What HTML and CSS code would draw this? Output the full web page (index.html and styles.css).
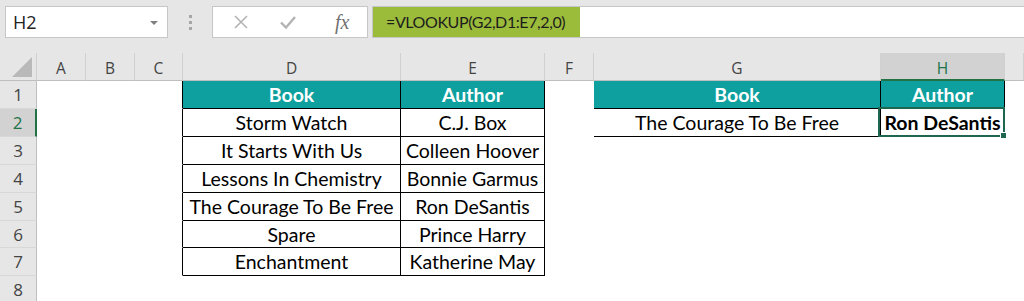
FILE: index.html
```html
<!DOCTYPE html>
<html lang="en">

<head>
    <meta charset="UTF-8">
    <title>VLOOKUP</title>

    <link rel="stylesheet" href="styles.css">

</head>

<body>

    <div class="bar">
        <div class="namebox">
            <span>H2</span>
            <span class="pil"></span>
        </div>
        <div class="prikker">
            <i></i><i></i><i></i>
        </div>
        <div class="knapper">
            <svg width="16" height="16" viewBox="0 0 16 16">
                <path d="M2 2 L14 14 M14 2 L2 14" stroke="#b3b3b3" stroke-width="1.6" fill="none" />
            </svg>
            <svg width="18" height="16" viewBox="0 0 18 16">
                <path d="M2 8.5 L7 13.5 L16 3" stroke="#b3b3b3" stroke-width="2.4" fill="none" />
            </svg>
            <span class="fx">fx</span>
        </div>
        <div class="formel">
            <span class="mark">=VLOOKUP(G2,D1:E7,2,0)</span>
        </div>
    </div>

    <div class="ark">
        <div class="hj"><span class="trekant"></span></div>
        <div class="kol">A</div>
        <div class="kol">B</div>
        <div class="kol">C</div>
        <div class="kol">D</div>
        <div class="kol">E</div>
        <div class="kol">F</div>
        <div class="kol">G</div>
        <div class="kol valgt">H</div>
        <div class="kol"></div>

        <div class="nr">1</div>
        <div></div><div></div><div class="kant"></div>
        <div class="t top">Book</div>
        <div class="t top kant">Author</div>
        <div></div>
        <div class="t top">Book</div>
        <div class="t top">Author</div>
        <div></div>

        <div class="nr valgt">2</div>
        <div></div><div></div><div class="kant"></div>
        <div class="t">Storm Watch</div>
        <div class="t kant">C.J. Box</div>
        <div></div>
        <div class="t">The Courage To Be Free</div>
        <div class="t aktiv">Ron DeSantis</div>
        <div></div>

        <div class="nr">3</div>
        <div></div><div></div><div class="kant"></div>
        <div class="t">It Starts With Us</div>
        <div class="t">Colleen Hoover</div>
        <div></div><div></div><div></div><div></div>

        <div class="nr">4</div>
        <div></div><div></div><div class="kant"></div>
        <div class="t">Lessons In Chemistry</div>
        <div class="t">Bonnie Garmus</div>
        <div></div><div></div><div></div><div></div>

        <div class="nr">5</div>
        <div></div><div></div><div class="kant"></div>
        <div class="t">The Courage To Be Free</div>
        <div class="t">Ron DeSantis</div>
        <div></div><div></div><div></div><div></div>

        <div class="nr">6</div>
        <div></div><div></div><div class="kant"></div>
        <div class="t">Spare</div>
        <div class="t">Prince Harry</div>
        <div></div><div></div><div></div><div></div>

        <div class="nr">7</div>
        <div></div><div></div><div class="kant"></div>
        <div class="t">Enchantment</div>
        <div class="t">Katherine May</div>
        <div></div><div></div><div></div><div></div>

        <div class="nr">8</div>
        <div></div><div></div><div></div><div></div><div></div><div></div><div></div><div></div><div></div>
    </div>

</body>

</html>
```

FILE: styles.css
```css
body {
    margin: 0;
    width: 1024px;
    height: 301px;
    overflow: hidden;
    background-color: #e6e6e6;
    font-family: Lato, "Noto Sans", sans-serif;
}

.bar {
    display: flex;
    height: 53px;
    box-sizing: border-box;
    padding: 6px 0 0 5px;
}

.namebox,
.knapper,
.formel {
    height: 32px;
    box-sizing: border-box;
    border: solid 1px #c6c6c6;
    background: #fff;
}

.namebox {
    width: 163px;
    display: flex;
    align-items: center;
    justify-content: space-between;
    padding: 0 9px 0 7px;
    font-family: "Open Sans", sans-serif;
    font-size: 18px;
    color: #222;
}

.pil {
    border-left: 4px solid transparent;
    border-right: 4px solid transparent;
    border-top: 4px solid #808080;
    margin-top: 2px;
}

.prikker {
    width: 44px;
    display: flex;
    flex-direction: column;
    align-items: center;
    justify-content: center;
    gap: 3px;
    height: 32px;
}

.prikker i {
    width: 3px;
    height: 3px;
    background: #a6a6a6;
}

.knapper {
    width: 156px;
    display: flex;
    align-items: center;
    padding-left: 20px;
    gap: 30px;
}

.fx {
    font-family: "Liberation Serif", serif;
    font-style: italic;
    font-size: 20px;
    color: #707070;
    margin-left: 8px;
}

.formel {
    flex: 1;
    margin-left: 4px;
    border-right: none;
}

.mark {
    display: inline-block;
    width: 207px;
    height: 30px;
    line-height: 30px;
    box-sizing: border-box;
    padding-left: 13px;
    background: #9bbb3b;
    font-size: 16px;
    letter-spacing: -0.4px;
    color: #1d1d1d;
}

.ark {
    display: grid;
    grid-template-columns: 37px 49px 49px 48px 218px 144px 49px 287px 124px 1fr;
    grid-template-rows: 28px 28px 28px 28px 28px 28px 27px 28px 28px 28px;
    background: #fff;
}

.ark > div {
    box-sizing: border-box;
    border-right: solid 1px transparent;
    border-bottom: solid 1px transparent;
    display: flex;
    align-items: center;
    justify-content: center;
    font-size: 19.5px;
    color: #000;
    white-space: nowrap;
}

.ark > .hj,
.ark > .kol,
.ark > .nr {
    background: #e6e6e6;
    font-family: "Open Sans", sans-serif;
    color: #444;
    border-right-color: #d0d0d0;
    border-bottom-color: #bfbfbf;
}

.ark > .kol {
    font-size: 15.5px;
    padding-top: 3px;
}

.ark > .nr {
    font-size: 17px;
    border-bottom-color: #d8d8d8;
    border-right-color: #bfbfbf;
}

.hj {
    position: relative;
}

.trekant {
    position: absolute;
    right: 4px;
    bottom: 3px;
    border-left: 20px solid transparent;
    border-bottom: 20px solid #b9b9b9;
}

.ark > .kol.valgt {
    background: #d2d2d2;
    color: #217346;
    border-bottom: solid 2px #217346;
}

.ark > .nr.valgt {
    background: #d2d2d2;
    color: #217346;
    border-right: solid 2px #217346;
}

.ark > .t {
    border-right-color: #000;
    border-bottom-color: #000;
}

.ark > .kant {
    border-right-color: #000;
}

.ark > .top {
    background: #0ea09e;
    color: #fff;
    font-weight: bold;
}

.ark > .aktiv {
    position: relative;
    font-weight: bold;
}

.aktiv::after {
    content: "";
    position: absolute;
    top: -2px;
    left: -3px;
    right: -1px;
    bottom: -1px;
    border: solid 2px #1e6650;
}

.aktiv::before {
    content: "";
    position: absolute;
    right: -3px;
    bottom: -3px;
    width: 5px;
    height: 5px;
    background: #1e6650;
    border: solid 1px #fff;
    z-index: 1;
}
```
